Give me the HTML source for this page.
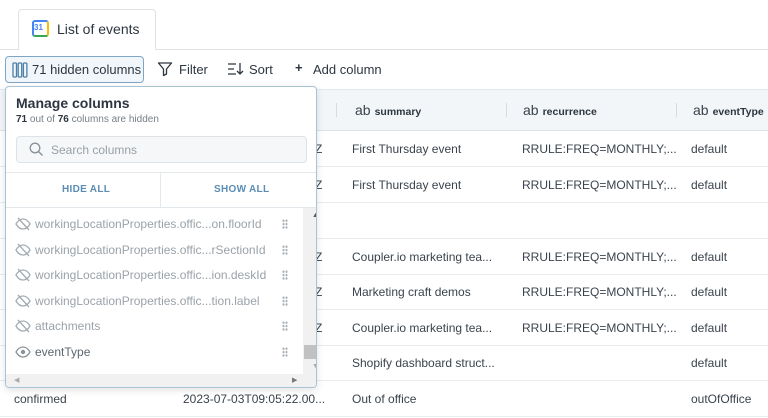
<!DOCTYPE html>
<html><head><meta charset="utf-8"><style>
*{margin:0;padding:0;box-sizing:border-box}
body{width:768px;height:418px;overflow:hidden;background:#fff;font-family:"Liberation Sans",sans-serif;color:#2d3640;position:relative}
.a{position:absolute;white-space:nowrap}
.row{position:absolute;left:0;width:768px;border-bottom:1px solid #e8ecef;height:36px}
.cell{position:absolute;font-size:12px;color:#3a434c;line-height:36px}
.hd{font-size:10.5px;font-weight:bold;color:#2d3640}
.ab{font-size:14px;font-weight:normal;color:#3a434c;margin-right:4px}
.sep{position:absolute;top:103px;width:1px;height:14px;background:#d5dbe0}
.item{position:absolute;left:15px;font-size:12px;color:#9aa2a9;height:20px;line-height:20px}
.drag{position:absolute;left:282px;width:6px;height:10px;background:radial-gradient(circle,#aab1b7 1px,transparent 1.3px) 0 0/3px 3.4px}
</style></head><body>
<div class="a" style="left:18px;top:9px;width:138px;height:41px;border:1px solid #dfe3e6;border-bottom:none;border-radius:4px 4px 0 0;background:#fff"></div>
<div class="a" style="left:0;top:49px;width:18px;height:1px;background:#dfe3e6"></div>
<div class="a" style="left:155px;top:49px;width:613px;height:1px;background:#dfe3e6"></div>
<div class="a" style="left:32px;top:20px;width:17px;height:17px;border-radius:3px;background:#fff;border:2px solid #4285f4;border-right-color:#fbbc04;border-bottom-color:#34a853"></div>
<div class="a" style="left:34px;top:23px;font-size:8px;color:#4285f4;font-weight:bold">31</div>
<div class="a" style="left:57px;top:21px;font-size:14px;color:#2d3640">List of events</div>
<div class="a" style="left:5px;top:56px;width:139px;height:27px;border:1px solid #7ea6c6;border-radius:4px;background:#f0f6fa"></div>
<svg class="a" style="left:12px;top:62px" width="16" height="16"><g fill="none" stroke="#4d7fa8" stroke-width="1.3"><rect x="1" y="1" width="3.5" height="14" rx="1"/><rect x="6.2" y="1" width="3.5" height="14" rx="1"/><rect x="11.4" y="1" width="3.5" height="14" rx="1"/></g></svg>
<div class="a" style="left:32px;top:62px;font-size:13px;color:#2d3640">71 hidden columns</div>
<svg class="a" style="left:157px;top:61px" width="16" height="16"><path d="M1.5 2h13l-5 6v5l-3 1.5V8z" fill="none" stroke="#2d3640" stroke-width="1.3" stroke-linejoin="round"/></svg>
<div class="a" style="left:179px;top:62px;font-size:13px">Filter</div>
<svg class="a" style="left:227px;top:61px" width="18" height="16"><g stroke="#2d3640" stroke-width="1.3" fill="none"><path d="M1 3h8M1 8h6M1 13h8M13 2v11M10 10l3 3 3-3"/></g></svg>
<div class="a" style="left:249px;top:62px;font-size:13px">Sort</div>
<div class="a" style="left:295px;top:60px;font-size:13px;font-weight:bold">+</div>
<div class="a" style="left:313px;top:62px;font-size:13px">Add column</div>
<div class="a" style="left:0;top:89px;width:768px;height:42px;background:#f3f6f9;border-top:1px solid #e3e8ec;border-bottom:1px solid #dde3e8"></div>
<div class="sep" style="left:336px"></div><div class="sep" style="left:506px"></div><div class="sep" style="left:676px"></div>
<div class="a hd" style="left:355px;top:102px"><span class="ab">ab</span>summary</div>
<div class="a hd" style="left:523px;top:102px"><span class="ab">ab</span>recurrence</div>
<div class="a hd" style="left:693px;top:102px"><span class="ab">ab</span>eventType</div>
<div class="row" style="top:131px"><div class="cell" style="left:315px">Z</div><div class="cell" style="left:352px">First Thursday event</div><div class="cell" style="left:522px">RRULE:FREQ=MONTHLY;...</div><div class="cell" style="left:691px">default</div></div>
<div class="row" style="top:167px"><div class="cell" style="left:315px">Z</div><div class="cell" style="left:352px">First Thursday event</div><div class="cell" style="left:522px">RRULE:FREQ=MONTHLY;...</div><div class="cell" style="left:691px">default</div></div>
<div class="row" style="top:203px"></div>
<div class="row" style="top:239px"><div class="cell" style="left:315px">Z</div><div class="cell" style="left:352px">Coupler.io marketing tea...</div><div class="cell" style="left:522px">RRULE:FREQ=MONTHLY;...</div><div class="cell" style="left:691px">default</div></div>
<div class="row" style="top:274px"><div class="cell" style="left:315px">Z</div><div class="cell" style="left:352px">Marketing craft demos</div><div class="cell" style="left:522px">RRULE:FREQ=MONTHLY;...</div><div class="cell" style="left:691px">default</div></div>
<div class="row" style="top:310px"><div class="cell" style="left:315px">Z</div><div class="cell" style="left:352px">Coupler.io marketing tea...</div><div class="cell" style="left:522px">RRULE:FREQ=MONTHLY;...</div><div class="cell" style="left:691px">default</div></div>
<div class="row" style="top:345px"><div class="cell" style="left:352px">Shopify dashboard struct...</div><div class="cell" style="left:691px">default</div></div>
<div class="row" style="top:381px"><div class="cell" style="left:14px">confirmed</div><div class="cell" style="left:183px">2023-07-03T09:05:22.00...</div><div class="cell" style="left:352px">Out of office</div><div class="cell" style="left:691px">outOfOffice</div></div>
<div class="a" style="left:5px;top:86px;width:312px;height:302px;background:#fff;border:1px solid #a9c3d6;border-radius:4px;box-shadow:0 2px 8px rgba(0,0,0,.12);overflow:hidden">
 <div class="a" style="left:10px;top:8px;font-size:14px;font-weight:bold;color:#2d3640">Manage columns</div>
 <div class="a" style="left:10px;top:27px;font-size:10px;color:#777f86"><b style="color:#2d3640">71</b> out of <b style="color:#2d3640">76</b> columns are hidden</div>
 <div class="a" style="left:10px;top:49px;width:291px;height:27px;border:1px solid #dde2e6;border-radius:4px;background:#f5f7f9"></div>
 <svg class="a" style="left:23px;top:55px" width="15" height="15"><circle cx="6" cy="6" r="4.8" fill="none" stroke="#8a939b" stroke-width="1.3"/><path d="M9.5 9.5l4 4" stroke="#8a939b" stroke-width="1.4"/></svg>
 <div class="a" style="left:45px;top:56px;font-size:12px;color:#98a0a7">Search columns</div>
 <div class="a" style="left:0;top:85px;width:312px;height:1px;background:#e3e8ec"></div>
 <div class="a" style="left:154px;top:86px;width:1px;height:35px;background:#e3e8ec"></div>
 <div class="a" style="left:0;top:120px;width:312px;height:1px;background:#e3e8ec"></div>
 <div class="a" style="left:56px;top:97px;font-size:10px;font-weight:bold;color:#5b8db5;letter-spacing:.3px">HIDE ALL</div>
 <div class="a" style="left:208px;top:97px;font-size:10px;font-weight:bold;color:#5b8db5;letter-spacing:.3px">SHOW ALL</div>
 <div class="a" style="left:297px;top:121px;width:15px;height:166px;background:#f1f1f1"></div>
 <div class="a" style="left:306px;top:125px;font-size:7px;color:#555">▲</div>
 <div class="a" style="left:298px;top:258px;width:12px;height:14px;background:#c1c1c1"></div>
 <div class="a" style="left:306px;top:276px;font-size:7px;color:#aaa">▼</div>
 <div class="a" style="left:0;top:287px;width:312px;height:14px;background:#f1f1f1"></div>
 <div class="a" style="left:8px;top:289px;font-size:7px;color:#aaa">◀</div>
 <div class="a" style="left:286px;top:289px;font-size:7px;color:#777">▶</div>
</div>
<svg width="0" height="0" style="position:absolute"><defs><g id="eh"><path d="M1 7c2-3.5 4.5-5 7-5s5 1.5 7 5c-2 3.5-4.5 5-7 5S3 10.5 1 7z" fill="none" stroke="#a4abb1" stroke-width="1.3"/><path d="M3 1l11 12" stroke="#a4abb1" stroke-width="1.3"/></g></defs></svg>
<svg class="a" style="left:15px;top:217px" width="16" height="14"><use href="#eh"/></svg>
<svg class="a" style="left:15px;top:243px" width="16" height="14"><use href="#eh"/></svg>
<svg class="a" style="left:15px;top:268px" width="16" height="14"><use href="#eh"/></svg>
<svg class="a" style="left:15px;top:294px" width="16" height="14"><use href="#eh"/></svg>
<svg class="a" style="left:15px;top:319px" width="16" height="14"><use href="#eh"/></svg>
<svg class="a" style="left:15px;top:345px" width="16" height="14"><path d="M1 7c2-3.5 4.5-5 7-5s5 1.5 7 5c-2 3.5-4.5 5-7 5S3 10.5 1 7z" fill="none" stroke="#8a939b" stroke-width="1.3"/><circle cx="8" cy="7" r="2.2" fill="#8a939b"/></svg>
<div class="item" style="left:35px;top:214px">workingLocationProperties.offic...on.floorId</div>
<div class="item" style="left:35px;top:240px">workingLocationProperties.offic...rSectionId</div>
<div class="item" style="left:35px;top:265px">workingLocationProperties.offic...ion.deskId</div>
<div class="item" style="left:35px;top:291px">workingLocationProperties.offic...tion.label</div>
<div class="item" style="left:35px;top:316px">attachments</div>
<div class="item" style="left:35px;top:342px;color:#5d666e">eventType</div>
<div class="drag" style="top:219px"></div><div class="drag" style="top:245px"></div><div class="drag" style="top:270px"></div><div class="drag" style="top:296px"></div><div class="drag" style="top:321px"></div><div class="drag" style="top:347px"></div>
</body></html>
